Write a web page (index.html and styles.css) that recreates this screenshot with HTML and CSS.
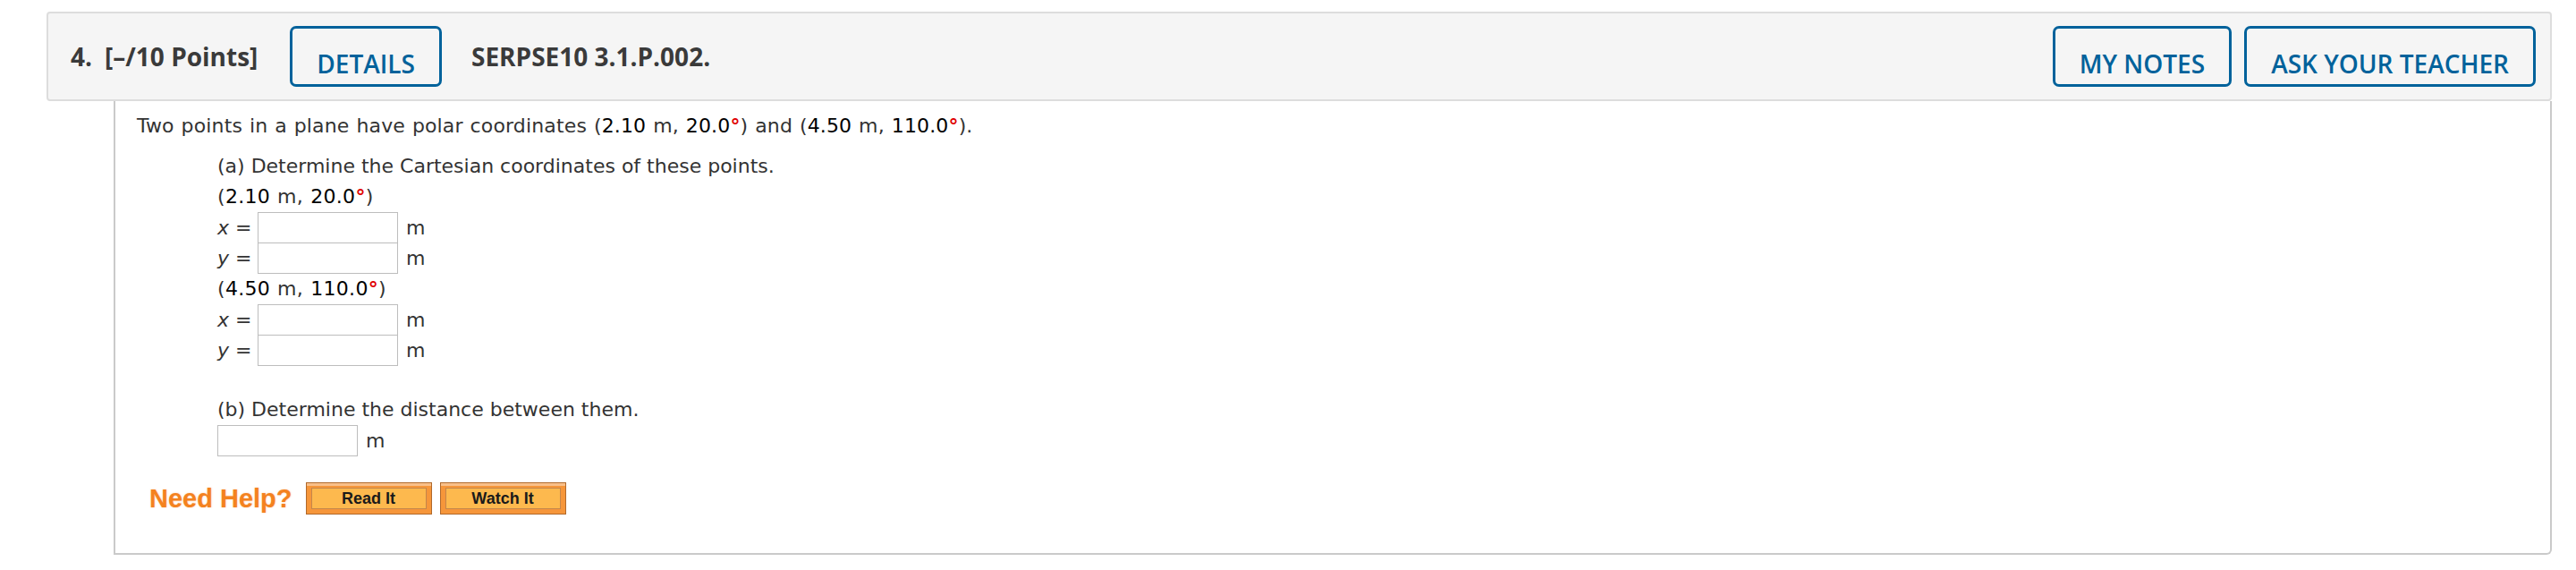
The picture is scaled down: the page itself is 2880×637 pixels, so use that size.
FILE: index.html
```html
<!DOCTYPE html>
<html lang="en">
<head>
<meta charset="utf-8">
<title>Question 4</title>
<link rel="stylesheet" href="styles.css">
</head>
<body>
<div class="question">
  <div class="q-header">
    <span class="q-num">4.</span>
    <span class="q-points">[–/10 Points]</span>
    <button class="hdr-btn details-btn" type="button">DETAILS</button>
    <span class="q-code">SERPSE10 3.1.P.002.</span>
    <div class="hdr-right">
      <button class="hdr-btn" type="button">MY NOTES</button>
      <button class="hdr-btn" type="button">ASK YOUR TEACHER</button>
    </div>
  </div>
  <div class="q-body">
    <p class="intro">Two points in a plane have polar coordinates (<span class="num">2.10</span> m, <span class="num">20.0</span><span class="deg">°</span>) and (<span class="num">4.50</span> m, <span class="num">110.0</span><span class="deg">°</span>).</p>

    <div class="part part-a">
      <div class="line">(a) Determine the Cartesian coordinates of these points.</div>
      <div class="line coord">(<span class="num">2.10</span> m, <span class="num">20.0</span><span class="deg">°</span>)</div>
      <div class="ans-row"><span class="lbl"><i>x</i> =</span><span class="ans-box"></span><span class="unit">m</span></div>
      <div class="ans-row stacked"><span class="lbl"><i>y</i> =</span><span class="ans-box"></span><span class="unit">m</span></div>
      <div class="line coord">(<span class="num">4.50</span> m, <span class="num">110.0</span><span class="deg">°</span>)</div>
      <div class="ans-row"><span class="lbl"><i>x</i> =</span><span class="ans-box"></span><span class="unit">m</span></div>
      <div class="ans-row stacked"><span class="lbl"><i>y</i> =</span><span class="ans-box"></span><span class="unit">m</span></div>
    </div>

    <div class="part part-b">
      <div class="line">(b) Determine the distance between them.</div>
      <div class="ans-row"><span class="ans-box"></span><span class="unit">m</span></div>
    </div>

    <div class="help-row">
      <span class="need-help">Need Help?</span>
      <button class="help-btn" type="button"><span class="help-inner">Read It</span></button>
      <button class="help-btn" type="button"><span class="help-inner">Watch It</span></button>
    </div>
  </div>
</div>
</body>
</html>
```

FILE: styles.css
```css
* { box-sizing: border-box; }

body {
  margin: 0;
  background: #ffffff;
  font-family: "DejaVu Sans", Verdana, sans-serif;
}

.question {
  padding-top: 13px;
}

.q-header {
  margin-left: 52px;
  width: 2801px;
  height: 100px;
  background: #f5f5f5;
  border: 2px solid #dddddd;
  border-radius: 4px;
  display: flex;
  align-items: center;
  padding: 0 16px 0 25px;
  font-family: "Open Sans", sans-serif;
  font-size: 28px;
  color: #3a3a3a;
}

.q-num {
  font-weight: 700;
  margin-right: 14px;
}

.q-points {
  font-weight: 700;
}

.q-code {
  font-weight: 700;
  margin-left: 33px;
}

.hdr-btn {
  font-family: "Open Sans", sans-serif;
  font-size: 28px;
  font-weight: 600;
  line-height: 28px;
  color: #00629b;
  background: transparent;
  border: 3px solid #00629b;
  border-radius: 7px;
  padding: 25px 27px 9px;
  height: 68px;
  margin: 0;
}

.details-btn {
  margin-left: 36px;
}

.hdr-right {
  margin-left: auto;
  display: flex;
  gap: 14px;
}

.q-body {
  margin-left: 127px;
  width: 2726px;
  border: 2px solid #cacaca;
  border-top: none;
  border-bottom-right-radius: 6px;
  padding: 15px 24px 43px;
  font-size: 22px;
  color: #333333;
}

.intro {
  margin: 0;
  line-height: 26px;
  letter-spacing: 0.15px;
  word-spacing: 0.75px;
}

.coord {
  letter-spacing: 0.3px;
  word-spacing: 0.75px;
}

.num { color: #000000; }

.deg {
  color: #e00000;
  font-weight: 700;
}

.part {
  margin-left: 90px;
}

.part-a {
  margin-top: 15px;
}

.part-b {
  margin-top: 32px;
}

.line {
  line-height: 34px;
}

.ans-row {
  display: flex;
  align-items: center;
  height: 35px;
}

.ans-row.stacked {
  margin-top: -1px;
}

.lbl {
  width: 45px;
  line-height: 34px;
}

.ans-box {
  display: block;
  width: 157px;
  height: 35px;
  border: 1px solid #bdbdbd;
  background: #ffffff;
}

.unit {
  margin-left: 9px;
  line-height: 34px;
}

.help-row {
  display: flex;
  align-items: center;
  margin-top: 29px;
  margin-left: 14px;
}

.need-help {
  font-family: "Liberation Sans", Arial, sans-serif;
  font-weight: 700;
  font-size: 29px;
  color: #f4821f;
  text-shadow: 0 0 2px rgba(244, 130, 31, 0.45);
  margin-right: 15px;
}

.help-btn {
  width: 141px;
  height: 36px;
  margin: 0 9px 0 0;
  padding: 5px;
  border: 1px solid #b0692b;
  background: linear-gradient(#f8c08a 0, #f8c08a 3px, #f6963a 3px, #f6963a 100%);
  display: block;
}

.help-inner {
  display: block;
  height: 24px;
  border: 1px solid #c4864b;
  background: #fdb94e;
  font-family: "Liberation Sans", Arial, sans-serif;
  font-weight: 700;
  font-size: 18px;
  line-height: 22px;
  color: #1a1a1a;
  text-align: center;
}
```
